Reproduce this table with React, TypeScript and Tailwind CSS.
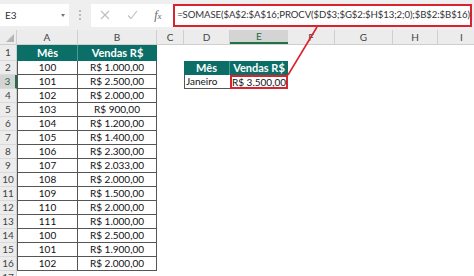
import React from "react";

const GRID = "grid grid-cols-[17px_61px_79px_27px_46px_58px_47px_58px_45px_48px] grid-rows-[100%]";
const LETTERS = ["A", "B", "C", "D", "E", "F", "G", "H", "I"];

const VENDAS: [number, string][] = [
  [100, "R$ 1.000,00"],
  [101, "R$ 2.500,00"],
  [102, "R$ 2.000,00"],
  [103, "R$ 900,00"],
  [104, "R$ 1.200,00"],
  [105, "R$ 1.400,00"],
  [106, "R$ 2.300,00"],
  [107, "R$ 2.033,00"],
  [108, "R$ 2.000,00"],
  [109, "R$ 1.500,00"],
  [110, "R$ 2.000,00"],
  [111, "R$ 1.000,00"],
  [100, "R$ 2.500,00"],
  [101, "R$ 1.900,00"],
  [102, "R$ 2.000,00"],
];

const FORMULA = "=SOMASE($A$2:$A$16;PROCV($D$3;$G$2:$H$13;2;0);$B$2:$B$16)";

function RowHeader({ n, active }: { n: number; active?: boolean }) {
  return (
    <div
      className={`flex items-center justify-center text-[10px] border-b border-[#dadada] ${
        active
          ? "bg-[#d4d4d4] text-[#1e6b40] border-r-2 border-r-[#217346]"
          : "bg-[#ececec] text-[#444] border-r border-r-[#cfcfcf]"
      }`}
    >
      {n}
    </div>
  );
}

function Empty({ n = 1 }: { n?: number }) {
  return (
    <>
      {Array.from({ length: n }).map((_, i) => (
        <div key={i} />
      ))}
    </>
  );
}

export default function App() {
  return (
    <div className="relative w-[474px] h-[276px] overflow-hidden bg-white font-['Lato',_'Open_Sans',_sans-serif] text-[#111] whitespace-nowrap">
      {/* Formula bar */}
      <div className="flex h-[30px] items-center bg-[#efefef] pr-[2px]">
        <div className="flex h-[22px] w-[73px] items-center justify-between bg-white pl-[5px] pr-[3px] text-[10px] text-[#333]">
          <span>E3</span>
          <span className="mr-[1px] h-0 w-0 border-x-[2.5px] border-t-[3px] border-x-transparent border-t-[#777]" />
        </div>
        <div className="flex w-[23px] flex-col items-center gap-[2px]">
          <span className="h-[2px] w-[2px] rounded-full bg-[#aaa]" />
          <span className="h-[2px] w-[2px] rounded-full bg-[#aaa]" />
          <span className="h-[2px] w-[2px] rounded-full bg-[#aaa]" />
        </div>
        <div className="flex h-[23px] flex-1 items-center bg-white">
          <div className="flex w-[82px] items-center pl-[9px]">
            <svg width="10" height="10" viewBox="0 0 10 10" className="mr-[17px]">
              <path d="M1 1 L9 9 M9 1 L1 9" stroke="#bdbdbd" strokeWidth="1.1" fill="none" />
            </svg>
            <svg width="11" height="10" viewBox="0 0 11 10" className="mr-[16px]">
              <path d="M1 5.5 L4 8.5 L10 1" stroke="#bdbdbd" strokeWidth="1.1" fill="none" />
            </svg>
            <span className="font-['Liberation_Serif',_serif] text-[12px] italic text-[#666]">
              f<span className="text-[9px]">x</span>
            </span>
          </div>
          <div className="flex h-[23px] flex-1 items-center border-2 border-[#d9232e] pl-[2px] text-[9.6px] tracking-[-0.1px] text-[#333]">
            {FORMULA}
          </div>
        </div>
      </div>

      {/* Column headers */}
      <div className={`${GRID} h-[15px] bg-[#ececec] border-b border-[#cfcfcf]`}>
        <div className="relative border-r border-[#cfcfcf]">
          <span className="absolute bottom-[2px] right-[2px] h-0 w-0 border-b-[8px] border-l-[8px] border-l-transparent border-b-[#b5b5b5]" />
        </div>
        {LETTERS.map((l) => (
          <div
            key={l}
            className={`flex items-center justify-center text-[10px] ${
              l === "E"
                ? "bg-[#d4d4d4] text-[#1e6b40] border-b-2 border-[#217346]"
                : "text-[#444] border-r border-[#cfcfcf]"
            }`}
          >
            {l}
          </div>
        ))}
      </div>

      {/* Row 1 */}
      <div className={`${GRID} h-[16px]`}>
        <RowHeader n={1} />
        <div className="flex items-center justify-center bg-[#0b6e67] text-[11px] font-bold text-white border-l border-[#0b6e67] border-r border-r-[#4f9a94]">
          Mês
        </div>
        <div className="flex items-center justify-center bg-[#0b6e67] text-[11px] font-bold text-white">
          Vendas R$
        </div>
        <Empty n={7} />
      </div>

      {/* Rows 2 - 16 */}
      {VENDAS.map(([mes, valor], i) => {
        const n = i + 2;
        return (
          <div key={n} className={`${GRID} h-[14px] overflow-hidden`}>
            <RowHeader n={n} active={n === 3} />
            <div className="flex items-center justify-center border-b border-l border-r border-[#555] text-[10px]">
              {mes}
            </div>
            <div className="flex items-center justify-center border-b border-r border-[#555] text-[10px]">
              {valor}
            </div>
            <div />
            {n === 2 && (
              <>
                <div className="flex items-center justify-center bg-[#0b6e67] text-[11px] font-bold text-white border-r border-[#4f9a94]">
                  Mês
                </div>
                <div className="flex items-center justify-center bg-[#0b6e67] text-[11px] font-bold text-white">
                  Vendas R$
                </div>
              </>
            )}
            {n === 3 && (
              <>
                <div className="flex items-center border-b border-l border-[#555] pl-[1px] text-[10px]">
                  Janeiro
                </div>
                <div className="flex items-center justify-center border-2 border-[#d9232e] text-[10px]">
                  R$ 3.500,00
                </div>
              </>
            )}
            {n > 3 && <Empty n={2} />}
            <Empty n={4} />
          </div>
        );
      })}

      {/* Row 17 (cut off) */}
      <div className={`${GRID} h-[14px]`}>
        <RowHeader n={17} />
      </div>

      {/* Arrow from the result cell to the formula */}
      <svg className="pointer-events-none absolute left-0 top-0" width="474" height="276">
        <line x1="288" y1="75" x2="317" y2="27" stroke="#d9232e" strokeWidth="1.6" />
      </svg>
    </div>
  );
}
